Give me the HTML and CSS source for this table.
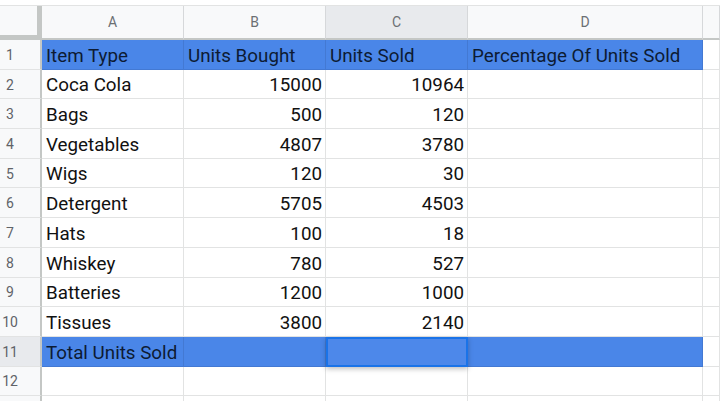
FILE: index.html
```html
<!DOCTYPE html>
<html>
<head>
<meta charset="utf-8">
<link rel="stylesheet" href="styles.css">
</head>
<body>
<div class="sheet">
  <div class="corner"></div>
  <div class="colhead">A</div>
  <div class="colhead">B</div>
  <div class="colhead sel">C</div>
  <div class="colhead">D</div>
  <div class="colhead"></div>

  <div class="rowhead"><span>1</span></div>
  <div class="cell hl">Item Type</div>
  <div class="cell hl">Units Bought</div>
  <div class="cell hl">Units Sold</div>
  <div class="cell hl">Percentage Of Units Sold</div>
  <div class="cell"></div>

  <div class="rowhead"><span>2</span></div>
  <div class="cell">Coca Cola</div>
  <div class="cell num">15000</div>
  <div class="cell num">10964</div>
  <div class="cell"></div>
  <div class="cell"></div>

  <div class="rowhead"><span>3</span></div>
  <div class="cell">Bags</div>
  <div class="cell num">500</div>
  <div class="cell num">120</div>
  <div class="cell"></div>
  <div class="cell"></div>

  <div class="rowhead"><span>4</span></div>
  <div class="cell">Vegetables</div>
  <div class="cell num">4807</div>
  <div class="cell num">3780</div>
  <div class="cell"></div>
  <div class="cell"></div>

  <div class="rowhead"><span>5</span></div>
  <div class="cell">Wigs</div>
  <div class="cell num">120</div>
  <div class="cell num">30</div>
  <div class="cell"></div>
  <div class="cell"></div>

  <div class="rowhead"><span>6</span></div>
  <div class="cell">Detergent</div>
  <div class="cell num">5705</div>
  <div class="cell num">4503</div>
  <div class="cell"></div>
  <div class="cell"></div>

  <div class="rowhead"><span>7</span></div>
  <div class="cell">Hats</div>
  <div class="cell num">100</div>
  <div class="cell num">18</div>
  <div class="cell"></div>
  <div class="cell"></div>

  <div class="rowhead"><span>8</span></div>
  <div class="cell">Whiskey</div>
  <div class="cell num">780</div>
  <div class="cell num">527</div>
  <div class="cell"></div>
  <div class="cell"></div>

  <div class="rowhead"><span>9</span></div>
  <div class="cell">Batteries</div>
  <div class="cell num">1200</div>
  <div class="cell num">1000</div>
  <div class="cell"></div>
  <div class="cell"></div>

  <div class="rowhead"><span>10</span></div>
  <div class="cell">Tissues</div>
  <div class="cell num">3800</div>
  <div class="cell num">2140</div>
  <div class="cell"></div>
  <div class="cell"></div>

  <div class="rowhead sel"><span>11</span></div>
  <div class="cell hl">Total Units Sold</div>
  <div class="cell hl"></div>
  <div class="cell hl active"></div>
  <div class="cell hl"></div>
  <div class="cell"></div>

  <div class="rowhead"><span>12</span></div>
  <div class="cell"></div>
  <div class="cell"></div>
  <div class="cell"></div>
  <div class="cell"></div>
  <div class="cell"></div>

  <div class="rowhead"></div>
  <div class="cell"></div>
  <div class="cell"></div>
  <div class="cell"></div>
  <div class="cell"></div>
  <div class="cell"></div>
</div>
</body>
</html>
```

FILE: styles.css
```css
html, body {
  margin: 0;
  padding: 0;
  background: #ffffff;
  overflow: hidden;
  width: 720px;
  height: 401px;
}

.sheet {
  margin-top: 5px;
  display: grid;
  grid-template-columns: 42px 142px 142px 142px 235px 1fr;
  grid-template-rows: 34px repeat(12, 29.7px) 10px;
  font-family: Roboto, "Liberation Sans", sans-serif;
  border-top: 1px solid #e2e3e3;
}

.corner {
  background: #f8f9fa;
  border-right: 5px solid #c4c7c5;
  border-bottom: 5px solid #c4c7c5;
  box-sizing: border-box;
}

.colhead {
  box-sizing: border-box;
  background: #f8f9fa;
  border-right: 1px solid #d6d8da;
  border-bottom: 2px solid #c4c7c5;
  color: #6b6f73;
  font-size: 14px;
  display: flex;
  align-items: center;
  justify-content: center;
}

.colhead.sel {
  background: #e8eaed;
}

.rowhead {
  box-sizing: border-box;
  background: #f8f9fa;
  border-right: 2px solid #c4c7c5;
  border-bottom: 1px solid #e2e3e3;
  color: #5f6368;
  font-size: 14px;
  display: flex;
  align-items: center;
  padding-top: 1px;
}

.rowhead span {
  width: 20px;
  text-align: center;
}

.rowhead.sel {
  background: #e8eaed;
}

.cell {
  box-sizing: border-box;
  border-right: 1px solid #e2e3e3;
  border-bottom: 1px solid #e2e3e3;
  font-size: 18.8px;
  color: #111111;
  display: flex;
  align-items: flex-end;
  padding: 0 3px 2px 4px;
  white-space: nowrap;
  overflow: hidden;
}

.cell.num {
  justify-content: flex-end;
}

.cell.hl {
  background: #4a86e8;
  border-right-color: #4379d3;
  border-bottom-color: #4379d3;
  color: #0d1b33;
}

.cell.active {
  position: relative;
  border: 2px solid #1a73e8;
  background: #4d88ea;
  padding: 0 2px 1px 3px;
  box-shadow: 0 2px 5px rgba(0, 0, 0, 0.25);
}
```
